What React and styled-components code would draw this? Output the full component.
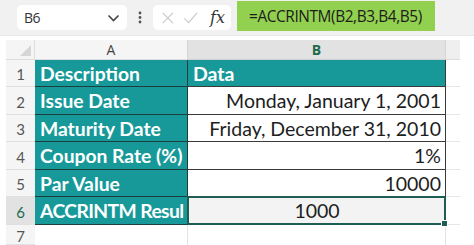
import React from 'react';
import styled, { createGlobalStyle } from 'styled-components';

const GlobalStyle = createGlobalStyle`
  body {
    margin: 0;
    background: #ffffff;
    overflow: hidden;
    font-family: Lato, "Liberation Sans", sans-serif;
  }
`;

const rows = [
    { label: 'Description', value: 'Data', head: true },
    { label: 'Issue Date', value: 'Monday, January 1, 2001' },
    { label: 'Maturity Date', value: 'Friday, December 31, 2010' },
    { label: 'Coupon Rate (%)', value: '1%' },
    { label: 'Par Value', value: '10000' },
    { label: 'ACCRINTM Resul', value: '1000', active: true },
];

const Page = styled.div`
  width: 474px;
  height: 245px;
  display: flex;
  flex-direction: column;
`;

const Toolbar = styled.div`
  height: 38px;
  background: #f1f1f1;
  display: flex;
  align-items: center;
  padding-left: 17px;
  border-bottom: 1px solid #e6e6e6;
`;

const NameBox = styled.div`
  width: 110px;
  height: 25px;
  background: #fff;
  border-radius: 5px;
  display: flex;
  align-items: center;
  justify-content: space-between;
  padding: 0 7px 0 7px;
  box-sizing: border-box;
  font-family: "Open Sans", sans-serif;
  font-size: 14px;
  color: #333;
  letter-spacing: -0.5px;
`;

const Dots = styled.div`
  width: 26px;
  display: flex;
  justify-content: center;
`;

const FxBox = styled.div`
  width: 78px;
  height: 25px;
  background: #fff;
  border-radius: 5px;
  display: flex;
  align-items: center;
  padding: 0 6px 0 8px;
  box-sizing: border-box;
  gap: 8px;
`;

const Fx = styled.span`
  font-family: "DejaVu Serif", "Liberation Serif", serif;
  font-style: italic;
  font-size: 16px;
  color: #333;
  margin-left: 4px;
`;

const Formula = styled.div`
  margin-left: 6px;
  width: 198px;
  height: 30px;
  margin-top: -3px;
  background: #92d050;
  display: flex;
  align-items: center;
  padding-left: 12px;
  box-sizing: border-box;
  font-family: "Open Sans", sans-serif;
  font-size: 15.4px;
  color: #1d1d1d;
  letter-spacing: -0.4px;
`;

const Sheet = styled.div`
  margin: 4px 0 0 6px;
  display: grid;
  grid-template-columns: 29px 153px 258px 14px;
  grid-template-rows: 20px 27px 28px 27px 28px 27px 28px 20px;
`;

const Corner = styled.div`
  background: #f5f5f5;
  border-right: 1px solid #dcdcdc;
  border-bottom: 1px solid #dcdcdc;
  position: relative;
  &::after {
    content: '';
    position: absolute;
    right: 3px;
    bottom: 3px;
    border-left: 11px solid transparent;
    border-bottom: 11px solid #d6d6d6;
  }
`;

const ColHead = styled.div`
  background: ${p => (p.$active ? '#e2e2e2' : '#f5f5f5')};
  color: ${p => (p.$active ? '#1c6b4e' : '#444')};
  font-weight: ${p => (p.$active ? 700 : 400)};
  border-right: 1px solid #d4d4d4;
  border-bottom: 1px solid ${p => (p.$active ? '#cfcfcf' : '#dcdcdc')};
  display: flex;
  align-items: center;
  justify-content: center;
  font-family: "Open Sans", sans-serif;
  font-size: 14px;
`;

const Filler = styled.div`
  background: #efefef;
  border-bottom: 1px solid #dcdcdc;
`;

const RowHead = styled.div`
  background: ${p => (p.$active ? '#e2e2e2' : '#f5f5f5')};
  color: ${p => (p.$active ? '#1c6b4e' : '#555')};
  border-bottom: 1px solid #e0e0e0;
  display: flex;
  align-items: center;
  justify-content: center;
  font-family: Lato, sans-serif;
  font-size: 15px;
  padding-top: 2px;
  box-sizing: border-box;
`;

const LabelCell = styled.div`
  background: #17999a;
  color: #fff;
  font-weight: 700;
  font-size: 19.3px;
  letter-spacing: ${p => (p.$tight ? '-0.6px' : '0')};
  display: flex;
  align-items: center;
  padding-left: 5px;
  white-space: nowrap;
  overflow: hidden;
  border-bottom: 1px solid #1e3d3d;
  border-right: 1px solid #1e3d3d;
`;

const ValueCell = styled.div`
  background: ${p => (p.$head ? '#17999a' : p.$active ? '#f3f3f3' : '#fff')};
  color: ${p => (p.$head ? '#fff' : '#1d1d1d')};
  font-weight: ${p => (p.$head ? 700 : 400)};
  font-size: 19.5px;
  display: flex;
  align-items: center;
  justify-content: ${p => (p.$head ? 'flex-start' : p.$active ? 'center' : 'flex-end')};
  padding: 0 4px 0 5px;
  white-space: nowrap;
  border-bottom: 1px solid #3a3a3a;
  border-right: 1px solid #3a3a3a;
  position: relative;
  ${p => p.$active && `
    border: 2px solid #1f5c52;
    margin: -1px 0 0 -1px;
    &::after {
      content: '';
      position: absolute;
      right: -4px;
      bottom: -4px;
      width: 5px;
      height: 5px;
      background: #1f5c52;
      border: 1px solid #fff;
    }
  `}
`;

const Grid = styled.div`
  border-bottom: 1px solid #e6e6e6;
`;

const Empty = styled.div`
  border-right: 1px solid #e3e3e3;
`;

const Chevron = () => (
    <svg width="13" height="8" viewBox="0 0 13 8">
        <path d="M1.5 1.5 L6.5 6.5 L11.5 1.5" fill="none" stroke="#444" strokeWidth="1.6" />
    </svg>
);

const VDots = () => (
    <svg width="4" height="13" viewBox="0 0 4 13">
        <circle cx="2" cy="2" r="1.4" fill="#555" />
        <circle cx="2" cy="6.5" r="1.4" fill="#555" />
        <circle cx="2" cy="11" r="1.4" fill="#555" />
    </svg>
);

const Cross = () => (
    <svg width="16" height="16" viewBox="0 0 16 16">
        <path d="M2 2 L14 14 M14 2 L2 14" stroke="#c8c8c8" strokeWidth="1.3" />
    </svg>
);

const Check = () => (
    <svg width="18" height="16" viewBox="0 0 18 16">
        <path d="M1.5 8.5 L6.5 13.5 L16.5 2" fill="none" stroke="#c8c8c8" strokeWidth="1.3" />
    </svg>
);

export default function App() {
    return (
        <Page>
            <GlobalStyle />
            <Toolbar>
                <NameBox>B6<Chevron /></NameBox>
                <Dots><VDots /></Dots>
                <FxBox>
                    <Cross />
                    <Check />
                    <Fx>fx</Fx>
                </FxBox>
                <Formula>=ACCRINTM(B2,B3,B4,B5)</Formula>
            </Toolbar>
            <Sheet>
                <Corner />
                <ColHead>A</ColHead>
                <ColHead $active>B</ColHead>
                <Filler />
                {rows.map((r, i) => (
                    <React.Fragment key={`row_${i}`}>
                        <RowHead $active={r.active}>{i + 1}</RowHead>
                        <LabelCell $tight={r.active}>{r.label}</LabelCell>
                        <ValueCell $head={r.head} $active={r.active}>{r.value}</ValueCell>
                        <Grid />
                    </React.Fragment>
                ))}
                <RowHead>7</RowHead>
                <Empty />
                <Empty />
                <div />
            </Sheet>
        </Page>
    );
}
